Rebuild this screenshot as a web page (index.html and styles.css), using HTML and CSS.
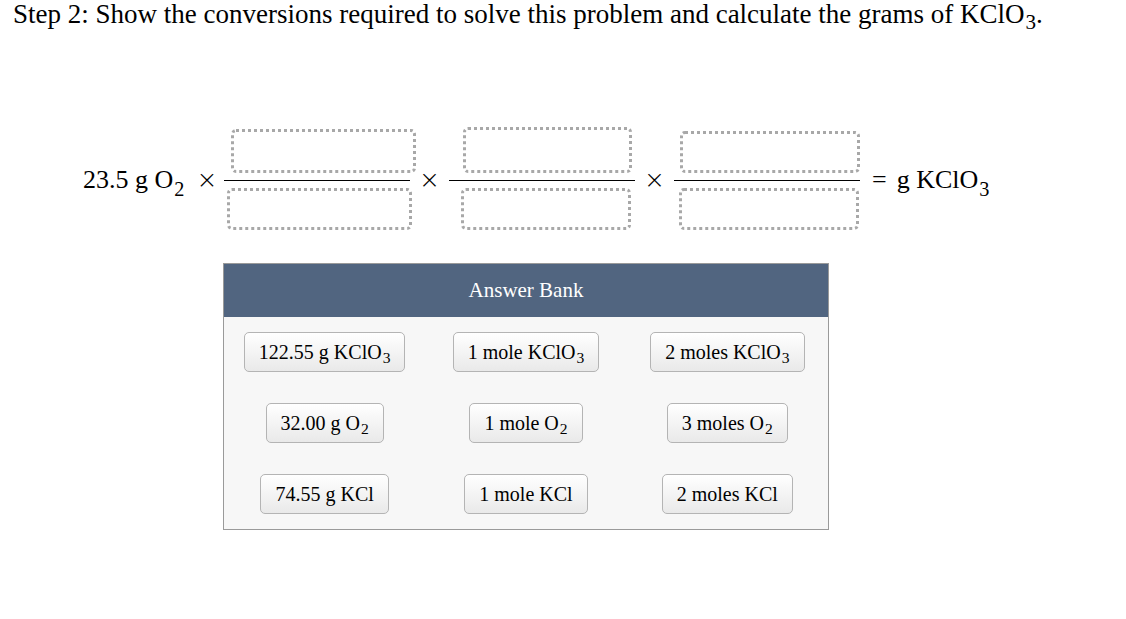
FILE: index.html
```html
<!DOCTYPE html>
<html lang="en">
<head>
<meta charset="utf-8">
<title>Step 2</title>
<link rel="stylesheet" href="styles.css">
</head>
<body>
<main class="page">
  <h1 class="step">Step 2: Show the conversions required to solve this problem and calculate the grams of KClO<sub class="sub">3</sub>.</h1>

  <div class="equation">
    <div class="given">23.5 g O<sub class="sub sub-low">2</sub><span class="op-times">×</span></div>

    <div class="fraction">
      <div class="slot slot-a-top"></div>
      <div class="bar"></div>
      <div class="slot slot-a-bottom"></div>
    </div>

    <div class="times">×</div>

    <div class="fraction">
      <div class="slot slot-b-top"></div>
      <div class="bar"></div>
      <div class="slot slot-b-bottom"></div>
    </div>

    <div class="times">×</div>

    <div class="fraction">
      <div class="slot slot-c-top"></div>
      <div class="bar"></div>
      <div class="slot slot-c-bottom"></div>
    </div>

    <div class="result"><span class="op-equals">=</span>g KClO<sub class="sub sub-low">3</sub></div>
  </div>

  <section class="bank">
    <header class="bank-head">Answer Bank</header>
    <div class="bank-grid">
      <div class="cell"><button class="chip">122.55 g KClO<sub class="sub">3</sub></button></div>
      <div class="cell"><button class="chip">1 mole KClO<sub class="sub">3</sub></button></div>
      <div class="cell"><button class="chip">2 moles KClO<sub class="sub">3</sub></button></div>

      <div class="cell"><button class="chip">32.00 g O<sub class="sub">2</sub></button></div>
      <div class="cell"><button class="chip">1 mole O<sub class="sub">2</sub></button></div>
      <div class="cell"><button class="chip">3 moles O<sub class="sub">2</sub></button></div>

      <div class="cell"><button class="chip">74.55 g KCl</button></div>
      <div class="cell"><button class="chip">1 mole KCl</button></div>
      <div class="cell"><button class="chip">2 moles KCl</button></div>
    </div>
  </section>
</main>
</body>
</html>
```

FILE: styles.css
```css
* {
  box-sizing: border-box;
}

html,
body {
  margin: 0;
  background: #ffffff;
}

body {
  font-family: "Liberation Serif", "Times New Roman", serif;
  color: #000000;
}

.page {
  width: 1126px;
  height: 619px;
  overflow: hidden;
}

.step {
  margin: 0;
  padding-left: 13px;
  font-size: 27px;
  font-weight: normal;
  line-height: 28px;
}

.sub {
  font-size: 0.78em;
  line-height: 0;
  padding-left: 1px;
  vertical-align: -0.3em;
}

.sub-low {
  vertical-align: -0.42em;
}

/* conversion chain */
.equation {
  display: flex;
  align-items: center;
  margin-top: 101px;
  padding-left: 83px;
  font-size: 26px;
}

.given {
  width: 141px;
  white-space: nowrap;
}

.op-times {
  margin-left: 12px;
  font-family: "DejaVu Sans", sans-serif;
  font-size: 25px;
  font-weight: 300;
}

.fraction {
  display: flex;
  flex-direction: column;
  width: 186px;
}

.bar {
  height: 1px;
  margin: 7px 0;
  background: #000000;
}

.slot {
  height: 44px;
  border: 3px dotted #a8a8a8;
  border-radius: 5px;
}

.slot-a-top {
  width: 185px;
  margin-left: 7px;
}

.slot-a-bottom {
  width: 185px;
  height: 42px;
  margin-left: 3px;
}

.slot-b-top {
  width: 169px;
  height: 46px;
  margin-top: -2px;
  margin-left: 14px;
}

.slot-b-bottom {
  width: 170px;
  height: 42px;
  margin-left: 12px;
}

.slot-c-top {
  width: 180px;
  height: 42px;
  margin-top: 2px;
  margin-left: 6px;
}

.slot-c-bottom {
  width: 180px;
  height: 42px;
  margin-left: 5px;
}

.times {
  width: 39px;
  text-align: center;
  font-family: "DejaVu Sans", sans-serif;
  font-size: 25px;
  font-weight: 300;
}

.result {
  margin-left: 12px;
  white-space: nowrap;
}

.op-equals {
  margin-right: 10px;
}

/* answer bank */
.bank {
  width: 606px;
  margin: 33px 0 0 223px;
  border: 1px solid #9a9a9a;
  background: #f7f7f7;
}

.bank-head {
  height: 53px;
  display: flex;
  align-items: center;
  justify-content: center;
  background: #516580;
  color: #ffffff;
  font-size: 21px;
}

.bank-grid {
  display: grid;
  grid-template-columns: repeat(3, 1fr);
  row-gap: 31px;
  padding: 15px 0;
}

.cell {
  display: flex;
  justify-content: center;
}

.chip {
  height: 40px;
  padding: 0 14px;
  border: 1px solid #b4b4b4;
  border-radius: 5px;
  background: linear-gradient(#ffffff, #e9e9e9);
  font-family: "Liberation Serif", "Times New Roman", serif;
  font-size: 20px;
  color: #000000;
  white-space: nowrap;
}
```
